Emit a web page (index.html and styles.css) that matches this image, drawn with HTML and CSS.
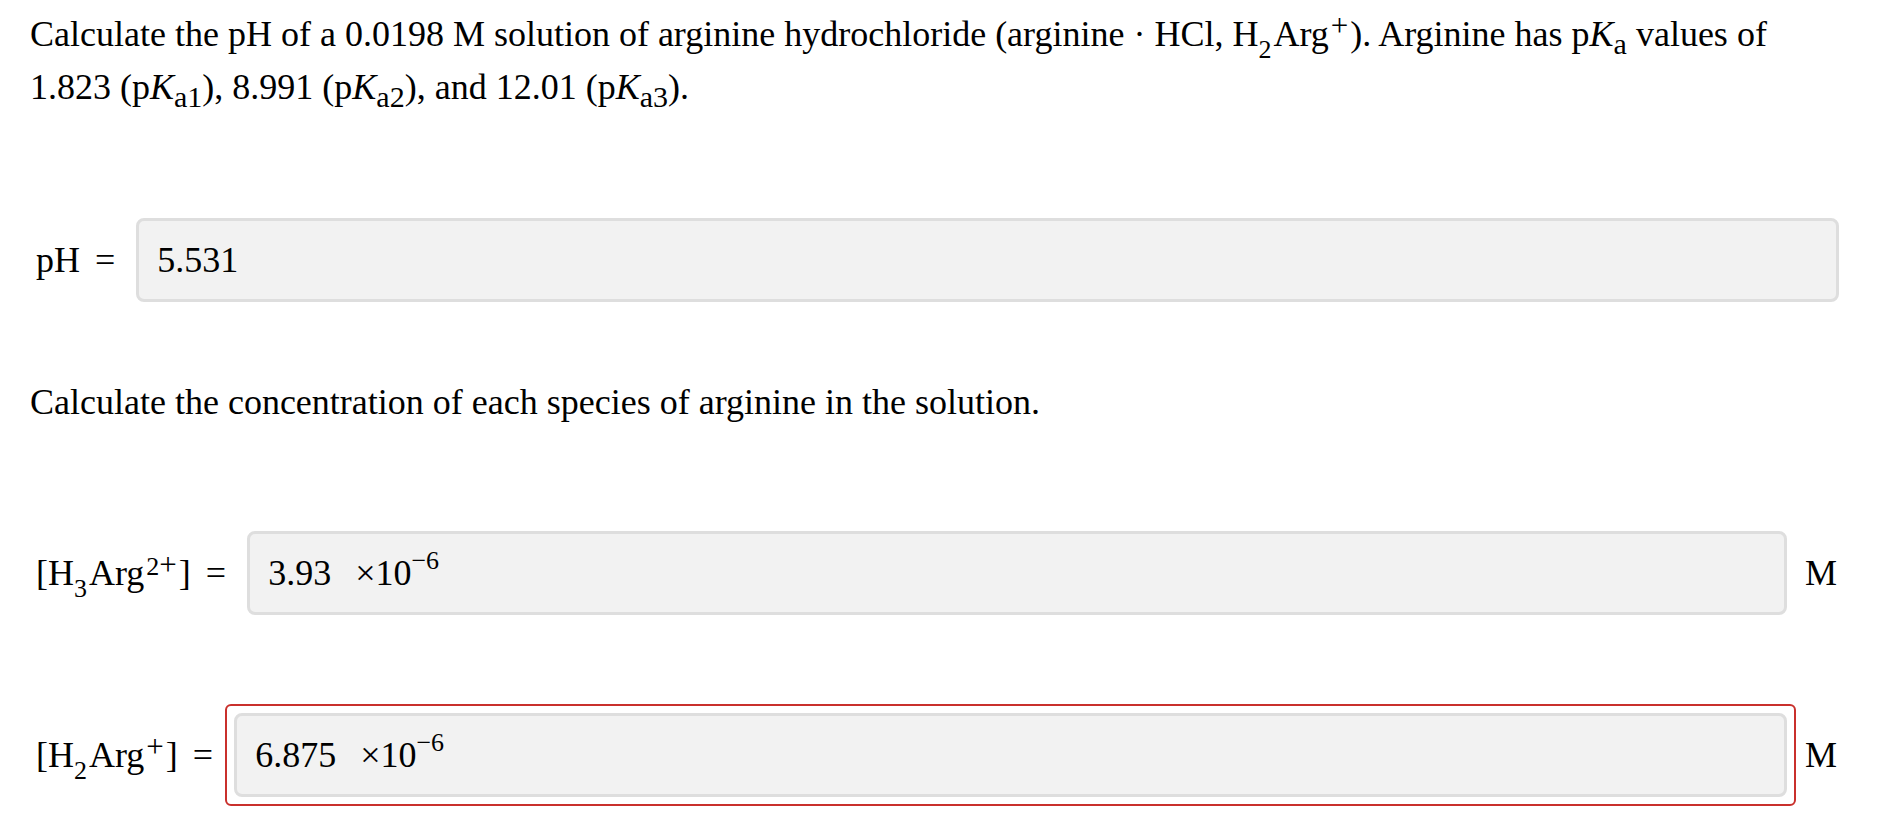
FILE: index.html
```html
<!DOCTYPE html>
<html>
<head>
<meta charset="utf-8">
<title>Arginine pH</title>
<link rel="stylesheet" href="styles.css">
</head>
<body>
<main class="page">
  <p class="prompt">Calculate the pH of a 0.0198 M solution of arginine hydrochloride (arginine · HCl, H<sub class="lo">2</sub>Arg<sup class="hi"><span class="plus">+</span></sup>). Arginine has p<i>K</i><sub>a</sub> values of<br>1.823 (p<i>K</i><sub>a1</sub>), 8.991 (p<i>K</i><sub>a2</sub>), and 12.01 (p<i>K</i><sub>a3</sub>).</p>

  <div class="row row-ph">
    <span class="label">pH <span class="eq">=</span></span>
    <div class="field"><div class="box">5.531</div></div>
  </div>

  <p class="prompt prompt-2">Calculate the concentration of each species of arginine in the solution.</p>

  <div class="row row-a">
    <span class="label">[H<sub class="lo">3</sub>Arg<sup class="hi">2<span class="plus">+</span></sup>] <span class="eq">=</span></span>
    <div class="field"><div class="box">3.93<span class="exp">×10<sup class="pow">−6</sup></span></div></div>
    <span class="unit">M</span>
  </div>

  <div class="row row-b">
    <span class="label">[H<sub class="lo">2</sub>Arg<sup class="hi"><span class="plus">+</span></sup>] <span class="eq">=</span></span>
    <div class="field wrong"><div class="box">6.875<span class="exp">×10<sup class="pow">−6</sup></span></div></div>
    <span class="unit">M</span>
  </div>
</main>
</body>
</html>
```

FILE: styles.css
```css
* { box-sizing: border-box; }
html, body { margin: 0; background: #fff; }
body {
  font-family: "Liberation Serif", "Times New Roman", serif;
  font-size: 36px;
  color: #000;
}
.page { padding: 8px 30px 0; }
.prompt { margin: 0; line-height: 53px; }
.prompt-2 { margin-top: 65px; }

sub { line-height: 0; }
sub.lo { font-size: 26px; line-height: 0; vertical-align: -12px; padding-right: 2px; }
sup.hi { font-size: 26px; line-height: 0; vertical-align: 10px; padding: 0 2px 0 2px; }
.plus { font-size: 31px; line-height: 0; }

.row { display: flex; align-items: center; padding-left: 6px; line-height: 40px; }
.row-ph { margin-top: 95px; }
.row-a { margin-top: 93px; }
.row-b { margin-top: 80px; }

.label { white-space: nowrap; margin-right: 12px; }
.eq { margin-left: 6px; }

.field {
  flex: 1;
  padding: 7px;
  border: 2px solid transparent;
  border-radius: 6px;
}
.field.wrong { border-color: #c9302c; }

.box {
  height: 84px;
  border: 3px solid #dedede;
  border-radius: 8px;
  background: #f2f2f2;
  padding-left: 18px;
  display: flex;
  align-items: center;
  white-space: nowrap;
}
.exp { margin-left: 24px; }
sup.pow { font-size: 26px; line-height: 0; vertical-align: 16px; }

.unit { margin-left: 9px; padding-right: 11px; }
```
